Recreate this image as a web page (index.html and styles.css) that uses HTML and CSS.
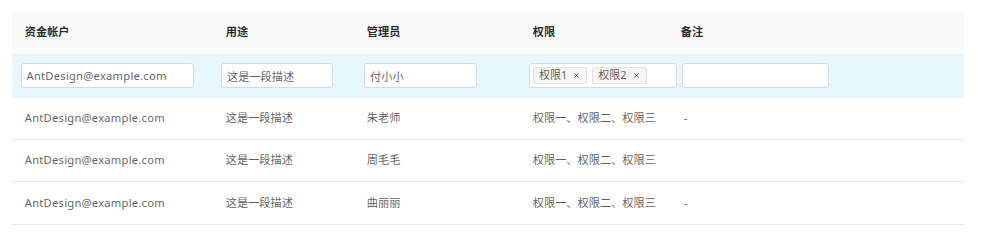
FILE: index.html
```html
<!DOCTYPE html>
<html lang="zh-CN">
<head>
<meta charset="utf-8">
<title>成员管理</title>
<link rel="stylesheet" href="styles.css">
</head>
<body>
<div class="page">
  <table class="grid">
    <colgroup>
      <col class="c-acct"><col class="c-use"><col class="c-admin"><col class="c-perm"><col class="c-note">
    </colgroup>
    <thead>
      <tr>
        <th>资金帐户</th>
        <th>用途</th>
        <th>管理员</th>
        <th>权限</th>
        <th>备注</th>
      </tr>
    </thead>
    <tbody>
      <tr class="editing">
        <td><input class="field f-acct latin" value="AntDesign@example.com"></td>
        <td><input class="field f-use" value="这是一段描述"></td>
        <td><input class="field f-admin" value="付小小"></td>
        <td>
          <div class="field f-perm tagbox">
            <span class="tag">权限1<svg class="x" viewBox="0 0 8 8"><path d="M1.5 1.5l5 5M6.5 1.5l-5 5"/></svg></span>
            <span class="tag">权限2<svg class="x" viewBox="0 0 8 8"><path d="M1.5 1.5l5 5M6.5 1.5l-5 5"/></svg></span>
          </div>
        </td>
        <td><input class="field f-note" value=""></td>
      </tr>
      <tr>
        <td class="latin">AntDesign@example.com</td>
        <td>这是一段描述</td>
        <td>朱老师</td>
        <td>权限一、权限二、权限三</td>
        <td><span class="dash">-</span></td>
      </tr>
      <tr>
        <td class="latin">AntDesign@example.com</td>
        <td>这是一段描述</td>
        <td>周毛毛</td>
        <td>权限一、权限二、权限三</td>
        <td></td>
      </tr>
      <tr>
        <td class="latin">AntDesign@example.com</td>
        <td>这是一段描述</td>
        <td>曲丽丽</td>
        <td>权限一、权限二、权限三</td>
        <td><span class="dash">-</span></td>
      </tr>
    </tbody>
  </table>
</div>
</body>
</html>
```

FILE: styles.css
```css
html, body {
  margin: 0;
  background: #fff;
}

body {
  font-family: "Noto Sans", "Noto Sans CJK SC", sans-serif;
  font-size: 11.2px;
  line-height: 1.5;
  color: rgba(0, 0, 0, 0.65);
}

.page {
  padding: 11px 17px 0 12px;
}

.grid {
  width: 952px;
  border-collapse: collapse;
  table-layout: fixed;
}

.c-acct { width: 201px; }
.c-use { width: 141px; }
.c-admin { width: 166px; }
.c-perm { width: 148px; }
.c-note { width: 296px; }

.grid th {
  background: #fafafa;
  color: rgba(0, 0, 0, 0.85);
  font-weight: 700;
  text-align: left;
  padding: 0 12.8px;
  height: 43px;
  box-sizing: border-box;
  border-bottom: 1px solid #f0f0f0;
}

.grid td {
  padding: 0 12.8px;
  height: 42.4px;
  box-sizing: border-box;
  border-bottom: 1px solid #e8e8e8;
  white-space: nowrap;
  overflow: visible;
}

.grid tr.editing td {
  background: #e6f7ff;
  padding: 0;
  height: 43px;
  border-bottom-color: #eaeef0;
}

/* Latin runs are set a touch wider than the CJK text around them */
.latin {
  letter-spacing: 0.24px;
}

.field {
  display: block;
  box-sizing: border-box;
  height: 25.6px;
  border: 1px solid #d9d9d9;
  border-radius: 3px;
  background: #fff;
  font: inherit;
  color: rgba(0, 0, 0, 0.65);
  padding: 0 5px;
  outline: none;
}

.field.latin {
  letter-spacing: 0.24px;
}

.f-acct { margin-left: 8.5px; width: 173px; }
.f-use { margin-left: 8px; width: 112px; }
.f-admin { margin-left: 10px; width: 113px; }
.f-perm { margin-left: 9px; width: 148px; position: relative; z-index: 1; }
.f-note { margin-left: 14px; width: 147px; }

.tagbox {
  display: flex;
  align-items: center;
  gap: 5px;
  padding: 0 3px;
}

.tag {
  display: inline-flex;
  align-items: center;
  height: 17.5px;
  box-sizing: border-box;
  padding: 0 6px 0 5px;
  background: #f5f5f5;
  border: 1px solid #e3e3e3;
  border-radius: 2px;
  color: rgba(0, 0, 0, 0.65);
  font-size: 11px;
}

.tag .x {
  width: 7px;
  height: 7px;
  margin-left: 6px;
  stroke: rgba(0, 0, 0, 0.55);
  stroke-width: 1.1;
  fill: none;
}

.dash {
  padding-left: 3px;
}
```
